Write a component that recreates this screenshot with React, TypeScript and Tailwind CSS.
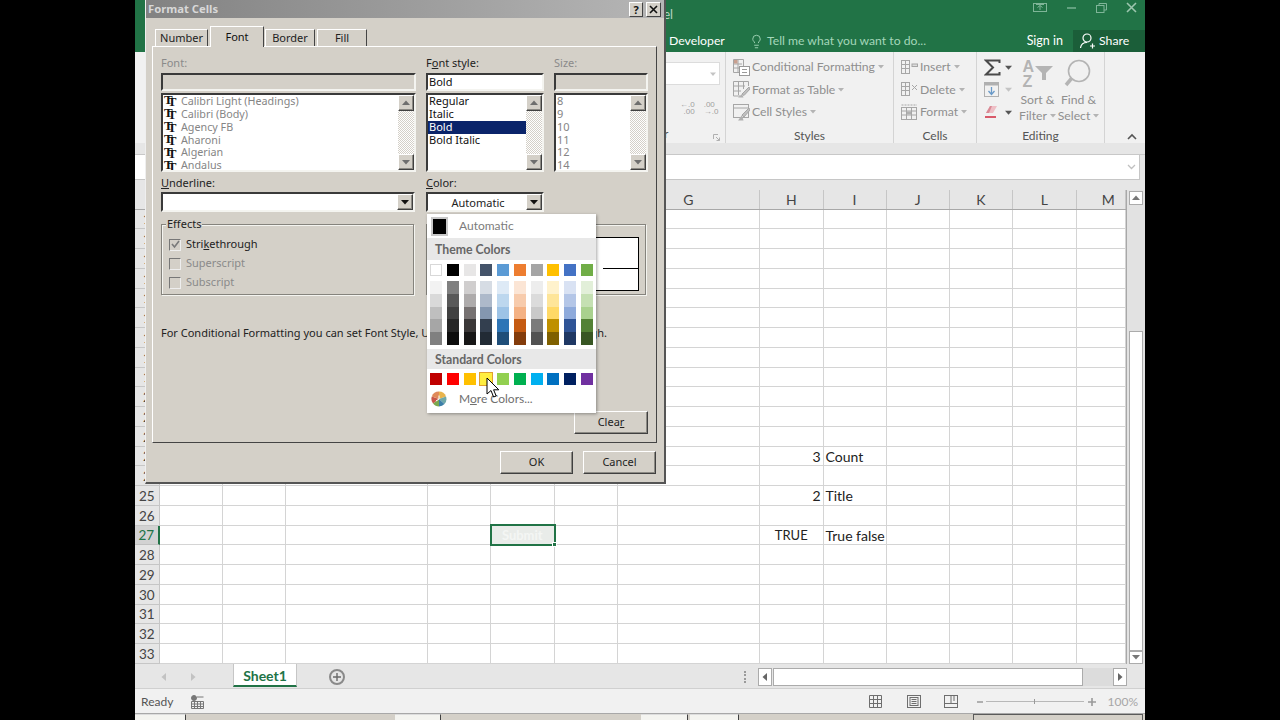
import React from "react";
import { Lightbulb } from "lucide-react";

const TAHOMA = "font-['Noto_Sans','DejaVu_Sans',sans-serif]";
const CAL = "font-['Lato','Noto_Sans',sans-serif]";

const COLS = [63, 63, 142.5, 63, 63.5, 63, 142.5, 63.5, 63, 63.5, 63, 63.5, 49.5];
const NAMES = ["", "", "", "", "", "", "G", "H", "I", "J", "K", "L", "M"];
const ROWS = Array.from({ length: 23 }, (_, i) => i + 11);

const THEME_TOP = [
  "bg-[#ffffff] border border-[#d8d8d8]", "bg-[#000000]", "bg-[#e7e6e6]", "bg-[#44546a]", "bg-[#5b9bd5]",
  "bg-[#ed7d31]", "bg-[#a5a5a5]", "bg-[#ffc000]", "bg-[#4472c4]", "bg-[#70ad47]",
];
const SHADES = [
  ["bg-[#f2f2f2]", "bg-[#d9d9d9]", "bg-[#bfbfbf]", "bg-[#a6a6a6]", "bg-[#808080]"],
  ["bg-[#808080]", "bg-[#595959]", "bg-[#404040]", "bg-[#262626]", "bg-[#0d0d0d]"],
  ["bg-[#d0cece]", "bg-[#aeabab]", "bg-[#767171]", "bg-[#3b3838]", "bg-[#181717]"],
  ["bg-[#d6dce4]", "bg-[#adb9ca]", "bg-[#8497b0]", "bg-[#333f4f]", "bg-[#222b35]"],
  ["bg-[#deeaf6]", "bg-[#bdd7ee]", "bg-[#9dc3e6]", "bg-[#2e75b6]", "bg-[#1f4e79]"],
  ["bg-[#fbe5d5]", "bg-[#f7cbac]", "bg-[#f4b183]", "bg-[#c55a11]", "bg-[#833c0b]"],
  ["bg-[#ededed]", "bg-[#dbdbdb]", "bg-[#c9c9c9]", "bg-[#7b7b7b]", "bg-[#525252]"],
  ["bg-[#fff2cc]", "bg-[#fee599]", "bg-[#ffd966]", "bg-[#bf9000]", "bg-[#7f6000]"],
  ["bg-[#d9e2f3]", "bg-[#b4c6e7]", "bg-[#8eaadb]", "bg-[#2f5496]", "bg-[#1f3864]"],
  ["bg-[#e2efd9]", "bg-[#c5e0b3]", "bg-[#a9d18e]", "bg-[#538135]", "bg-[#385623]"],
];
const STANDARD = [
  "bg-[#c00000]", "bg-[#ff0000]", "bg-[#ffc000]", "bg-[#ffee40] outline outline-1 outline-[#e0a030]", "bg-[#92d050]",
  "bg-[#00b050]", "bg-[#00b0f0]", "bg-[#0070c0]", "bg-[#002060]", "bg-[#7030a0]",
];

function Tri({ dir, color = "#404040", size = 8 }: { dir: "up" | "down" | "left" | "right"; color?: string; size?: number }) {
  const pts = { up: "4,1.5 8,6 0,6", down: "0,2 8,2 4,6.5", left: "6,0 6,8 1.5,4", right: "2,0 2,8 6.5,4" }[dir];
  return (
    <svg width={size} height={size} viewBox="0 0 8 8">
      <polygon points={pts} fill={color} />
    </svg>
  );
}

function Caret() {
  return <svg width="6" height="4" viewBox="0 0 6 4" className="ml-[3px]"><polygon points="0,0 6,0 3,3.5" fill="#b4b4b4" /></svg>;
}

function Btn95({ children, className = "" }: { children?: React.ReactNode; className?: string }) {
  return (
    <div className={`flex items-center justify-center bg-[#d4d0c8] border border-t-white border-l-white border-r-[#404040] border-b-[#404040] shadow-[inset_-1px_-1px_0_#8c8a84] ${className}`}>
      {children}
    </div>
  );
}

const SUNKEN = "border-2 border-t-[#3a3a3a] border-l-[#3a3a3a] border-r-[#f4f4f0] border-b-[#f4f4f0]";

function VScroll() {
  return (
    <div className="w-[16px] h-full flex flex-col bg-[repeating-conic-gradient(#d4d0c8_0_25%,#ffffff_0_50%)] bg-[length:2px_2px]">
      <Btn95 className="w-[16px] h-[16px] shrink-0"><Tri dir="up" color="#6e6e6e" /></Btn95>
      <div className="flex-1" />
      <Btn95 className="w-[16px] h-[16px] shrink-0"><Tri dir="down" color="#6e6e6e" /></Btn95>
    </div>
  );
}

function TT() {
  return (
    <span className="flex w-[14px] h-[12px] leading-[12px] font-['Liberation_Serif',serif] font-bold text-[13px] text-[#111] ml-[1px] mr-[3px] shrink-0">
      <span className="-translate-y-[1px]">T</span>
      <span className="-ml-[5px] translate-y-[1px]">T</span>
    </span>
  );
}

function Label({ children, muted }: { children: React.ReactNode; muted?: boolean }) {
  return <div className={`h-[17px] leading-[14px] ${muted ? "text-[#8a8a8a]" : "text-[#222]"}`}>{children}</div>;
}

function FontCol() {
  const fonts = ["Calibri Light (Headings)", "Calibri (Body)", "Agency FB", "Aharoni", "Algerian", "Andalus"];
  return (
    <div className="w-[255px] flex flex-col">
      <Label muted>Font:</Label>
      <div className={`h-[18px] w-[255px] bg-[#d4d0c8] ${SUNKEN} mb-[2px]`} />
      <div className={`h-[79px] bg-white ${SUNKEN} flex`}>
        <div className="flex-1 text-[#858585] text-[10.75px] overflow-hidden">
          {fonts.map((f) => (
            <div key={f} className="h-[12.85px] leading-[12.85px] flex items-center whitespace-nowrap"><TT />{f}</div>
          ))}
        </div>
        <VScroll />
      </div>
    </div>
  );
}

function StyleCol() {
  const styles = ["Regular", "Italic", "Bold", "Bold Italic"];
  return (
    <div className="w-[118px] flex flex-col">
      <Label>F<u>o</u>nt style:</Label>
      <div className={`h-[18px] bg-white ${SUNKEN} mb-[2px] leading-[14px] pl-[1px] text-[#111]`}>Bold</div>
      <div className={`h-[79px] bg-white ${SUNKEN} flex`}>
        <div className="flex-1 overflow-hidden">
          {styles.map((s) => (
            <div key={s} className={`h-[12.85px] leading-[12.85px] pl-[1px] whitespace-nowrap ${s === "Bold" ? "bg-[#0a246a] text-white" : "text-[#111]"}`}>{s}</div>
          ))}
        </div>
        <VScroll />
      </div>
    </div>
  );
}

function SizeCol() {
  return (
    <div className="w-[94px] flex flex-col">
      <Label muted>Size:</Label>
      <div className={`h-[18px] bg-[#d4d0c8] ${SUNKEN} mb-[2px]`} />
      <div className={`h-[79px] bg-white ${SUNKEN} flex`}>
        <div className="flex-1 overflow-hidden text-[#858585]">
          {[8, 9, 10, 11, 12, 14].map((s) => (
            <div key={s} className="h-[12.85px] leading-[12.85px] pl-[1px]">{s}</div>
          ))}
        </div>
        <VScroll />
      </div>
    </div>
  );
}

function Check({ label, checked }: { label: React.ReactNode; checked?: boolean }) {
  return (
    <div className={`h-[19px] flex items-center pl-[7px] ${checked ? "text-[#222]" : "text-[#8a8a8a]"}`}>
      <span className="w-[12px] h-[12px] mr-[5px] flex items-center justify-center border border-t-[#777] border-l-[#777] border-r-[#eee] border-b-[#eee]">
        {checked && (
          <svg width="9" height="9" viewBox="0 0 9 9"><path d="M1 4 L3.5 7 L8 1" fill="none" stroke="#7a7a7a" strokeWidth="1.6" /></svg>
        )}
      </span>
      {label}
    </div>
  );
}

const GROOVE = "border border-[#85837d] shadow-[1px_1px_0_#f4f4f0,inset_1px_1px_0_#f4f4f0]";
const TAB = "h-[17px] flex items-center justify-center border-t border-l border-r border-t-white border-l-white border-r-[#444] text-[#222]";

function Dialog() {
  return (
    <div className={`absolute left-[145px] top-0 w-[521px] h-[484px] bg-[#d4d0c8] flex flex-col border-r-2 border-b-2 border-r-[#555] border-b-[#555] border-l border-l-[#efefef] text-[11px] ${TAHOMA}`}>
      <div className="h-[18px] shrink-0 flex items-center justify-between bg-gradient-to-r from-[#828282] to-[#b6b6b6] pl-[2px] pr-[3px]">
        <span className="font-bold text-[#d8d8d8] text-[11.25px] leading-none">Format Cells</span>
        <div className="flex gap-[3px]">
          <div className="w-[14px] h-[15px] bg-[#d4d0c8] border border-t-white border-l-white border-r-[#444] border-b-[#444] flex items-center justify-center font-bold text-[11px] leading-none text-[#111]">?</div>
          <div className="w-[15px] h-[15px] bg-[#d4d0c8] border border-t-white border-l-white border-r-[#444] border-b-[#444] flex items-center justify-center">
            <svg width="9" height="9" viewBox="0 0 9 9"><path d="M1 1 L8 8 M8 1 L1 8" stroke="#111" strokeWidth="1.6" /></svg>
          </div>
        </div>
      </div>
      <div className="h-[28px] shrink-0 flex items-end pl-[9px] relative z-10">
        <div className={`w-[53px] ${TAB}`}>Number</div>
        <div className="ml-[2px] w-[54px] h-[21px] bg-[#d4d0c8] flex items-center justify-center border-t border-l border-r border-t-white border-l-white border-r-[#444] text-[#111] -mb-[1px]">Font</div>
        <div className={`ml-[1px] w-[50px] ${TAB}`}>Border</div>
        <div className={`ml-[2px] w-[50px] ${TAB}`}>Fill</div>
      </div>
      <div className="ml-[6px] w-[505px] h-[397px] shrink-0 border border-t-white border-l-white border-r-[#444] border-b-[#444] pl-[8px] pt-[9px] flex flex-col">
        <div className="flex gap-[10px]">
          <FontCol />
          <StyleCol />
          <SizeCol />
        </div>
        <div className="flex gap-[10px] mt-[4px]">
          <div className="w-[255px]">
            <Label><u>U</u>nderline:</Label>
            <div className={`h-[20px] w-[254px] mt-[-1px] bg-white ${SUNKEN} flex justify-end`}>
              <Btn95 className="w-[16px] h-[16px]"><Tri dir="down" color="#111" /></Btn95>
            </div>
          </div>
          <div className="w-[118px]">
            <Label><u>C</u>olor:</Label>
            <div className={`h-[20px] mt-[-1px] bg-white ${SUNKEN} flex items-center`}>
              <span className="flex-1 text-center text-[#222] leading-none pl-[2px]">Automatic</span>
              <Btn95 className="w-[16px] h-[16px]"><Tri dir="down" color="#111" /></Btn95>
            </div>
          </div>
        </div>
        <div className="flex gap-[12px] mt-[12px]">
          <div className={`relative w-[253px] h-[71px] pt-[10px] ${GROOVE}`}>
            <span className="absolute left-[4px] -top-[8px] px-[1px] bg-[#d4d0c8] text-[#222] leading-[13px]">Effects</span>
            <Check checked label={<>Stri<u>k</u>ethrough</>} />
            <Check label="Superscript" />
            <Check label="Subscript" />
          </div>
          <div className={`w-[220px] h-[71px] pt-[12px] pr-[6px] flex justify-end ${GROOVE}`}>
            <div className="w-[200px] h-[54px] bg-white border border-black flex items-center justify-end">
              <div className="w-[35px] h-px bg-black mt-[9px]" />
            </div>
          </div>
        </div>
        <div className="mt-[31px] h-[14px] leading-[14px] whitespace-nowrap text-[#222]">For Conditional Formatting you can set Font Style, Underline, Color, and Strikethrough.</div>
        <div className="mt-[71px] pr-[8px] flex justify-end">
          <Btn95 className="w-[74px] h-[23px] text-[#222]">Clea<u>r</u></Btn95>
        </div>
      </div>
      <div className="flex justify-end gap-[10px] pr-[8px] pt-[8px]">
        <Btn95 className="w-[73px] h-[23px] text-[#222]">OK</Btn95>
        <Btn95 className="w-[73px] h-[23px] text-[#222]">Cancel</Btn95>
      </div>
    </div>
  );
}

function Picker() {
  return (
    <div className={`absolute left-[427px] top-[214px] w-[169px] h-[199px] bg-white flex flex-col shadow-[1px_1px_3px_rgba(0,0,0,0.35)] text-[12px] ${CAL}`}>
      <div className="h-[24px] flex items-center pl-[4px] shrink-0">
        <div className="w-[17px] h-[19px] border-2 border-[#c8c8c8] bg-[#000]" />
        <span className="ml-[11px] text-[#7c7c7c]">Automatic</span>
      </div>
      <div className="h-[22px] pt-[2px] bg-[#e8e8e8] flex items-center pl-[8px] font-bold text-[#666] shrink-0 text-[12.25px]">Theme Colors</div>
      <div className="flex justify-between px-[3px] mt-[4px] h-[12px] shrink-0">
        {THEME_TOP.map((c, i) => <div key={i} className={`w-[12px] h-[12px] ${c}`} />)}
      </div>
      <div className="flex justify-between px-[3px] mt-[5px] shrink-0">
        {SHADES.map((col, i) => (
          <div key={i} className="w-[12px] flex flex-col">
            {col.map((c, j) => <div key={j} className={`h-[12.8px] ${c}`} />)}
          </div>
        ))}
      </div>
      <div className="h-[20px] mt-[4px] pt-[3px] bg-[#e8e8e8] flex items-center pl-[8px] font-bold text-[#666] shrink-0 text-[12.25px]">Standard Colors</div>
      <div className="flex justify-between px-[3px] mt-[4px] h-[12px] shrink-0">
        {STANDARD.map((c, i) => <div key={i} className={`w-[12px] h-[12px] ${c}`} />)}
      </div>
      <div className="flex items-center pl-[4px] mt-[6px] h-[16px] shrink-0">
        <svg width="16" height="16" viewBox="0 0 16 16">
          <path d="M8 8 L8 0.5 A7.5 7.5 0 0 1 15 5.5 Z" fill="#e9b44c" />
          <path d="M8 8 L15 5.5 A7.5 7.5 0 0 1 13.5 13 Z" fill="#6fa8a8" />
          <path d="M8 8 L13.5 13 A7.5 7.5 0 0 1 8 15.5 Z" fill="#3c7fa8" />
          <path d="M8 8 L8 15.5 A7.5 7.5 0 0 1 2 12.5 Z" fill="#7aa84f" />
          <path d="M8 8 L2 12.5 A7.5 7.5 0 0 1 0.8 5.5 Z" fill="#c8574a" />
          <path d="M8 8 L0.8 5.5 A7.5 7.5 0 0 1 8 0.5 Z" fill="#e08a5a" />
          <path d="M8 4.5 V8 L5 10" stroke="#fff" fill="none" />
        </svg>
        <span className="ml-[12px] text-[#6f6f6f]">M<u>o</u>re Colors...</span>
      </div>
    </div>
  );
}

function Cursor() {
  return (
    <svg className="absolute left-[486px] top-[377px]" width="14" height="22" viewBox="0 0 14 22">
      <path d="M1 1 V17 L5 13.5 L7.6 20 L10.2 19 L7.6 12.8 H12.8 Z" fill="#fff" stroke="#000" strokeWidth="1" />
    </svg>
  );
}

const ICO = "#a6a6a6";

function CFIcon() {
  return (
    <svg width="17" height="17" viewBox="0 0 17 17" fill="none" stroke={ICO}>
      <path d="M0.5 0.5 H10.5 V7 M0.5 0.5 V13.5 H6 M0.5 5 H9 M0.5 9 H6 M5 0.5 V13" />
      <rect x="1" y="1" width="3.5" height="3.5" fill="#c8a090" stroke="none" />
      <rect x="6.5" y="7.5" width="10" height="9" fill="#fff" stroke="#999" />
      <path d="M9 10.5 H14 M9 13.5 H14" stroke="#999" />
    </svg>
  );
}
function TableIcon() {
  return (
    <svg width="17" height="17" viewBox="0 0 17 17" fill="none" stroke={ICO}>
      <path d="M0.5 0.5 H15.5 V5 M0.5 0.5 V15 H7 M0.5 5 H12 M0.5 10 H8 M5.5 0.5 V14 M10.5 0.5 V8" />
      <path d="M16 6 L9 13 L11 14.5 L17 8 Z" fill="#c0c0c0" />
      <path d="M9 13 L5 16.5 H10.5 Z" fill="#b0b0b0" stroke="none" />
    </svg>
  );
}
function StyleIcon() {
  return (
    <svg width="17" height="17" viewBox="0 0 17 17" fill="none" stroke={ICO}>
      <rect x="0.5" y="0.5" width="15" height="13" />
      <path d="M0.5 4 H15" />
      <path d="M16 4 L9 11 L11 13 L17 6 Z" fill="#c0c0c0" />
      <path d="M9 11 L5 16.5 H10.5 Z" fill="#b0b0b0" stroke="none" />
    </svg>
  );
}
function CellIcon({ kind }: { kind: "i" | "d" | "f" }) {
  return (
    <svg width="17" height="17" viewBox="0 0 17 17" fill="none" stroke={ICO}>
      {kind === "f" ? (
        <>
          <path d="M0.5 1 H16" strokeDasharray="2 1" />
          <rect x="0.5" y="3.5" width="15" height="12" />
          <path d="M0.5 7 H15 M0.5 11 H15 M5.5 3.5 V15 M10.5 3.5 V15" />
          <rect x="6" y="7.5" width="4" height="3" fill="#b0b0b0" stroke="none" />
        </>
      ) : (
        <>
          <rect x="0.5" y="1.5" width="8" height="4" />
          <rect x="0.5" y="5.5" width="8" height="4" />
          <rect x="0.5" y="9.5" width="8" height="5" />
          <path d="M4.5 1.5 V14" />
          {kind === "i" ? <rect x="11" y="5" width="5.5" height="2.5" fill="#ddd" /> : <path d="M11 4 L16 9 M16 4 L11 9" />}
        </>
      )}
    </svg>
  );
}

function RibbonItem({ icon, label, caret = true }: { icon: React.ReactNode; label: string; caret?: boolean }) {
  return (
    <div className="h-[22.5px] flex items-center whitespace-nowrap text-[12.2px] text-[#8f8f8f]">
      <span className="w-[17px] h-[17px] mr-[2px] flex shrink-0">{icon}</span>
      {label}
      {caret && <Caret />}
    </div>
  );
}

function Group({ label, width, pad = "", children }: { label: string; width: string; pad?: string; children: React.ReactNode }) {
  return (
    <div className={`${width} h-full flex flex-col border-r border-r-[#d4d4d4]`}>
      <div className={`h-[77px] pt-[4px] ${pad}`}>{children}</div>
      <div className="h-[14px] leading-[14px] text-center text-[12px] text-[#555]">{label}</div>
    </div>
  );
}

function Ribbon() {
  return (
    <div className={`h-[91px] shrink-0 bg-[#f1f1f1] flex ${CAL}`}>
      <div className="w-[530px]" />
      <div className="w-[61px] h-full flex flex-col border-r border-r-[#d4d4d4]">
        <div className="mt-[10px] w-[55px] h-[23px] bg-white border-y border-r border-[#dcdcdc] flex justify-end items-center pr-[3px]">
          <Tri dir="down" color="#c4c4c4" size={6} />
        </div>
        <div className="mt-[14px] flex gap-[9px] pl-[15px] h-[18px] items-center text-[8px] leading-[7px] text-[#a0a0a0] font-['Liberation_Sans',sans-serif]">
          <span className="text-right">←.0<br />.00</span>
          <span>.00<br />→.0</span>
        </div>
        <div className="flex-1 flex items-end justify-between pb-[2px] pr-[5px] text-[12px] text-[#555] leading-[14px]">
          <span className="-ml-[1px]">r</span>
          <svg width="7" height="7" viewBox="0 0 7 7" fill="none" stroke="#b0b0b0"><path d="M0.5 5 V0.5 H5" /><path d="M3 3 L6.5 6.5 M6.5 3.5 V6.5 H3.5" /></svg>
        </div>
      </div>
      <Group label="Styles" width="w-[168px]" pad="pl-[7px]">
        <RibbonItem icon={<CFIcon />} label="Conditional Formatting" />
        <RibbonItem icon={<TableIcon />} label="Format as Table" />
        <RibbonItem icon={<StyleIcon />} label="Cell Styles" />
      </Group>
      <Group label="Cells" width="w-[83px]" pad="pl-[7px]">
        <RibbonItem icon={<CellIcon kind="i" />} label="Insert" />
        <RibbonItem icon={<CellIcon kind="d" />} label="Delete" />
        <RibbonItem icon={<CellIcon kind="f" />} label="Format" />
      </Group>
      <Group label="Editing" width="w-[128px]">
        <div className="flex pl-[7px]">
          <div className="w-[33px] shrink-0 flex flex-col">
            <div className="h-[22.5px] flex items-center">
              <svg width="17" height="17" viewBox="0 0 17 17" fill="none"><path d="M15.5 4 V1.5 H2 L9 8.5 L2 15.5 H15.5 V13" stroke="#4a4a4a" strokeWidth="2" /></svg>
              <span className="ml-[4px]"><Tri dir="down" color="#555" size={7} /></span>
            </div>
            <div className="h-[22.5px] flex items-center">
              <svg width="16" height="16" viewBox="0 0 16 16" fill="none"><rect x="0.5" y="0.5" width="14" height="14" stroke="#b0b0b0" /><rect x="0.5" y="0.5" width="14" height="3" fill="#b0b0b0" /><path d="M7.5 5 V12 M4.5 9 L7.5 12.5 L10.5 9" stroke="#6a9ac8" strokeWidth="1.3" /></svg>
              <span className="ml-[5px]"><Tri dir="down" color="#c4c4c4" size={7} /></span>
            </div>
            <div className="h-[22.5px] flex items-center">
              <svg width="17" height="16" viewBox="0 0 17 16" fill="none"><path d="M6 2 L13 2 L9 9 L2 9 Z" fill="#eebfc6" /><path d="M2 9 L6 2 L8 2 L5 9 Z" fill="#d98a95" /><path d="M1 13 H12" stroke="#d85a6a" strokeWidth="2" /></svg>
              <span className="ml-[4px]"><Tri dir="down" color="#555" size={7} /></span>
            </div>
          </div>
          <div className="w-[41px] shrink-0 flex flex-col items-center text-[12.2px] leading-[16px] text-[#8f8f8f]">
            <div className="h-[36px] flex items-center text-[#b4b4b4] font-['Liberation_Sans',sans-serif] text-[16px] leading-[15px] font-bold">
              <span className="w-[12px]">A<br />Z</span>
              <svg width="18" height="16" viewBox="0 0 18 16" className="mt-[-2px]"><path d="M0 1 H18 L11 8 V15 H7 V8 Z" fill="#b4b4b4" /></svg>
            </div>
            <span className="whitespace-nowrap">Sort &amp;</span>
            <span className="flex items-center whitespace-nowrap">Filter<Caret /></span>
          </div>
          <div className="w-[41px] shrink-0 flex flex-col items-center text-[12.2px] leading-[16px] text-[#8f8f8f]">
            <div className="h-[36px] flex items-center">
              <svg width="30" height="30" viewBox="0 0 30 30" fill="none"><circle cx="15" cy="12" r="10.5" stroke="#b4b4b4" strokeWidth="1.6" /><path d="M7.5 19.5 L2 26" stroke="#b4b4b4" strokeWidth="3.5" /></svg>
            </div>
            <span className="whitespace-nowrap">Find &amp;</span>
            <span className="flex items-center whitespace-nowrap">Select<Caret /></span>
          </div>
        </div>
      </Group>
      <div className="flex-1 flex items-end justify-end pr-[8px] pb-[3px]">
        <svg width="10" height="7" viewBox="0 0 10 7" fill="none"><path d="M1 6 L5 2 L9 6" stroke="#555" strokeWidth="1.6" /></svg>
      </div>
    </div>
  );
}

function TitleBars() {
  return (
    <>
      <div className={`h-[30px] shrink-0 bg-[#217346] flex items-center ${CAL}`}>
        <div className="w-[538px] text-right text-[12.5px] text-[#b5d5c4] whitespace-nowrap overflow-hidden">Book1 - Excel</div>
        <div className="flex-1 flex justify-end items-center gap-[17px] pr-[8px] -mt-[15px]">
          <svg width="14" height="9" viewBox="0 0 14 9" fill="none" stroke="#7fb598"><rect x="0.5" y="0.5" width="13" height="8" /><path d="M7 7 V2.5 M4.5 4.5 L7 2.5 L9.5 4.5 M3 1.5 H11" /></svg>
          <svg className="ml-[2px]" width="11" height="9" viewBox="0 0 11 9"><path d="M1 5 H10" stroke="#7fb598" strokeWidth="1.4" /></svg>
          <svg className="ml-[2px]" width="11" height="10" viewBox="0 0 11 10" fill="none" stroke="#7fb598"><rect x="0.5" y="2.5" width="7.5" height="7" /><path d="M3 2.5 V0.5 H10.5 V7 H8" /></svg>
          <svg className="ml-[2px]" width="11" height="11" viewBox="0 0 11 11"><path d="M1 1 L10 10 M10 1 L1 10" stroke="#9cc6ae" strokeWidth="1.6" /></svg>
        </div>
      </div>
      <div className={`h-[22px] shrink-0 bg-[#217346] flex items-center ${CAL}`}>
        <div className="w-[534px]" />
        <span className="text-[12.25px] text-white w-[80px]">Developer</span>
        <Lightbulb size={15} color="#9fd2b4" strokeWidth={1.5} />
        <span className="ml-[3px] text-[12.2px] text-[#a4d6b9] whitespace-nowrap">Tell me what you want to do...</span>
        <div className="flex-1" />
        <span className="text-[12.5px] text-white mr-[10px]">Sign in</span>
        <div className="w-[72px] h-full bg-[#1b5e39] flex items-center pl-[7px] text-[12.25px] text-white">
          <svg width="15" height="16" viewBox="0 0 15 16" fill="none" stroke="#fff" strokeWidth="1.2">
            <circle cx="7" cy="5" r="4" />
            <path d="M0.5 15 C1 11.5 3.5 9.5 7 9.5 M10 13 H15 M12.5 10.5 V15.5" />
          </svg>
          <span className="ml-[4px]">Share</span>
        </div>
      </div>
    </>
  );
}

function Cell({ w, children, className = "" }: { w: number; children?: React.ReactNode; className?: string }) {
  return (
    <div style={{ width: w }} className={`h-full shrink-0 pt-[1px] border-r border-b border-[#d4d4d4] flex items-center whitespace-nowrap overflow-hidden text-[14px] text-[#222] ${className}`}>
      {children}
    </div>
  );
}

function GridRow({ n }: { n: number }) {
  const sel = n === 27;
  const content: Record<number, React.ReactNode> = {};
  const cls: Record<number, string> = {};
  if (n === 23 || n === 25) {
    content[7] = n === 23 ? "3" : "2";
    cls[7] = "justify-end pr-[2px]";
    content[8] = n === 23 ? "Count" : "Title";
    cls[8] = "pl-[2px]";
  }
  if (sel) {
    content[4] = <span className="font-bold text-[#f4f6f4] text-[13px]">Submit</span>;
    cls[4] = "justify-center relative";
    content[7] = <span className="text-[13px]">TRUE</span>;
    cls[7] = "justify-center";
    content[8] = "True false";
    cls[8] = "pl-[2px] overflow-visible";
  }
  return (
    <div className="h-[19.75px] flex">
      <div className={`w-[24.5px] shrink-0 h-full flex items-center justify-center pt-[1px] border-b border-r text-[13.5px] ${n < 25 ? "pl-[8px]" : ""} ${sel ? "bg-[#d2d2d2] text-[#217346] border-r-2 border-r-[#217346] border-b-[#c0c0c0]" : "bg-[#e6e6e6] text-[#444] border-[#c6c6c6]"}`}>{n}</div>
      {COLS.map((w, i) => (
        <Cell key={i} w={w} className={`${sel && i === 4 ? "bg-[#e9ece9]" : "bg-white"} ${cls[i] ?? ""}`}>{content[i]}</Cell>
      ))}
    </div>
  );
}

function Sheet() {
  return (
    <div className={`flex h-[473.75px] shrink-0 ${CAL} relative`}>
      <div className="w-[991px] flex flex-col">
        <div className="h-[19.5px] flex bg-[#e6e6e6] border-b border-[#a8a8a8] shrink-0">
          <div className="w-[24.5px] shrink-0" />
          {COLS.map((w, i) => (
            <div key={i} style={{ width: w }} className={`shrink-0 flex items-center justify-center text-[14px] text-[#444] border-r border-[#c6c6c6] ${NAMES[i] === "M" ? "pl-[15px]" : ""}`}>{NAMES[i]}</div>
          ))}
        </div>
        {ROWS.map((n) => <GridRow key={n} n={n} />)}
      </div>
      <div className="absolute left-[355px] top-[334px] w-[66px] h-[22px] border-2 border-[#217346] pointer-events-none">
        <span className="absolute -right-[3px] -bottom-[3px] w-[5px] h-[5px] bg-[#217346] border border-white" />
      </div>
      <div className="w-[19px] border-l border-[#a8a8a8] bg-[#e2e2e2] flex flex-col items-center pt-[1px]">
        <div className="w-[14px] h-[14px] bg-white border border-[#ababab] flex items-center justify-center"><Tri dir="up" color="#777" /></div>
        <div className="w-[14px] h-[320px] mt-[126px] bg-white border border-[#ababab]" />
        <div className="w-[14px] h-[13px] bg-white border border-[#ababab] flex items-center justify-center"><Tri dir="down" color="#777" /></div>
      </div>
    </div>
  );
}

function SheetBar() {
  return (
    <div className={`h-[24.25px] shrink-0 bg-[#e6e6e6] flex items-start ${CAL}`}>
      <div className="w-[98px] h-full flex items-center pl-[25px] gap-[21px] pt-[2px]">
        <Tri dir="left" color="#c2c2c2" />
        <Tri dir="right" color="#c2c2c2" />
      </div>
      <div className="w-[64px] h-[23px] pt-[2px] bg-white border-b-2 border-l border-r border-l-[#c6c6c6] border-r-[#c6c6c6] border-b-[#217346] flex items-center justify-center font-bold text-[#217346] text-[14px]">Sheet1</div>
      <div className="w-[32px]" />
      <div className="w-[16px] h-[16px] mt-[5px] rounded-full border-2 border-[#8a8a8a] flex items-center justify-center">
        <svg width="8" height="8" viewBox="0 0 8 8"><path d="M4 0 V8 M0 4 H8" stroke="#6a6a6a" strokeWidth="1.4" /></svg>
      </div>
      <div className="flex-1" />
      <div className="w-[2px] h-[12px] mt-[7px] mr-[12px] border-l-2 border-dotted border-[#9a9a9a]" />
      <div className="w-[369px] h-[18px] mt-[4px] mr-[18px] flex items-stretch">
        <div className="w-[14px] bg-white border border-[#ababab] flex items-center justify-center"><Tri dir="left" color="#666" /></div>
        <div className="w-[311px] ml-[1px] bg-white border border-[#ababab]" />
        <div className="w-[30px] bg-[#dcdcdc]" />
        <div className="flex-1" />
        <div className="w-[14px] bg-white border border-[#ababab] flex items-center justify-center"><Tri dir="right" color="#666" /></div>
      </div>
    </div>
  );
}

function StatusBar() {
  return (
    <div className={`h-[26px] shrink-0 pt-[1px] bg-[#f1f1f1] border-t border-[#d0d0d0] border-b border-b-[#a8a8a8] flex items-center ${CAL}`}>
      <span className="ml-[6px] text-[12px] text-[#555] w-[50px]">Ready</span>
      <svg width="13" height="14" viewBox="0 0 13 14" fill="none" stroke="#777">
        <circle cx="3" cy="3" r="2.5" fill="#777" />
        <path d="M6 2 H12.5 M0.5 6.5 H12.5 V13.5 H0.5 Z M0.5 9 H12.5 M0.5 11.5 H12.5 M3.5 6.5 V13.5 M6.5 6.5 V13.5 M9.5 6.5 V13.5" />
      </svg>
      <div className="flex-1" />
      <svg width="13" height="13" viewBox="0 0 13 13" fill="none" stroke="#6e6e6e"><path d="M0.5 0.5 H12.5 V12.5 H0.5 Z M0.5 4.5 H12.5 M0.5 8.5 H12.5 M4.5 0.5 V12.5 M8.5 0.5 V12.5" /></svg>
      <svg className="ml-[25px]" width="14" height="13" viewBox="0 0 14 13" fill="none" stroke="#6e6e6e"><rect x="0.5" y="0.5" width="13" height="12" /><rect x="3" y="2.5" width="8" height="8" /><path d="M4.5 4.5 H9.5 M4.5 6.5 H9.5 M4.5 8.5 H9.5" /></svg>
      <svg className="ml-[23px]" width="14" height="13" viewBox="0 0 14 13" fill="none" stroke="#6e6e6e"><rect x="0.5" y="0.5" width="13" height="12" /><path d="M7 0.5 V8.5 H0.5 M7 8.5 H13.5 M10 0.5 V6" /></svg>
      <span className="ml-[19px] w-[6px] h-[2px] bg-[#b0b0b0]" />
      <div className="ml-[3px] w-[98px] h-[1px] bg-[#b8b8b8] flex justify-center items-center"><span className="w-[1px] h-[5px] bg-[#999]" /></div>
      <svg className="ml-[4px]" width="8" height="8" viewBox="0 0 8 8"><path d="M4 0 V8 M0 4 H8" stroke="#9a9a9a" strokeWidth="1.6" /></svg>
      <span className="ml-[12px] mr-[7px] text-[12px] text-[#a6a6a6]">100%</span>
    </div>
  );
}

function Taskbar() {
  const piece = "h-full bg-[#f4f4f0] border-t border-t-[#ddd] border-r border-r-[#404040]";
  return (
    <div className="h-[6px] shrink-0 bg-[#d4d0c8] flex">
      <div className={`w-[51px] ${piece}`} />
      <div className="w-[209px]" />
      <div className={`w-[46px] ${piece}`} />
      <div className="w-[200px]" />
      <div className={`w-[47px] ${piece}`} />
      <div className="w-[2px]" />
      <div className={`w-[49px] ${piece}`} />
      <div className="w-[234px]" />
      <div className="w-[170px] h-full border-t border-x border-[#5a5a5a]" />
    </div>
  );
}

export default function App() {
  return (
    <div className="relative w-[1280px] h-[720px] bg-black overflow-hidden flex justify-center">
      <div className="w-[1010px] h-full flex flex-col bg-[#e6e6e6]">
        <TitleBars />
        <Ribbon />
        <div className="h-[12px] shrink-0 bg-[#e6e6e6] border-b border-[#c8c8c8]" />
        <div className="h-[25px] shrink-0 bg-[#e6e6e6] pr-[5px]">
          <div className="h-full bg-white border-b border-r border-[#c6c6c6] flex items-center justify-end pr-[3px]">
            <svg width="9" height="6" viewBox="0 0 9 6" fill="none"><path d="M1 1 L4.5 4.5 L8 1" stroke="#c0c0c0" strokeWidth="1.3" /></svg>
          </div>
        </div>
        <div className="h-[10px] shrink-0" />
        <Sheet />
        <SheetBar />
        <StatusBar />
        <Taskbar />
      </div>
      <Dialog />
      <Picker />
      <Cursor />
    </div>
  );
}
